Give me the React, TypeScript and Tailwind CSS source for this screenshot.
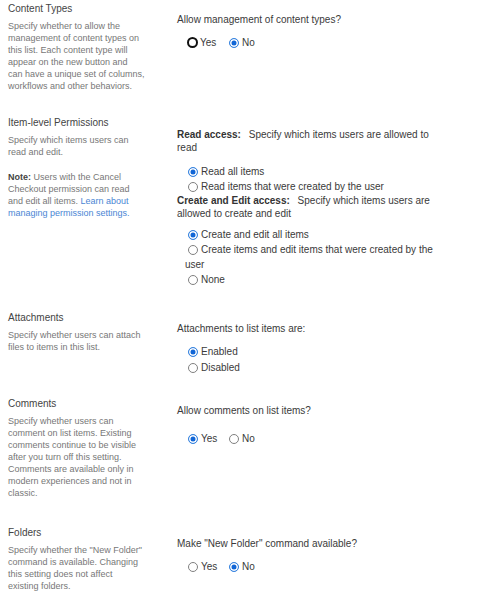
import type { ReactNode } from "react";

function Radio({ checked = false, focused = false }: { checked?: boolean; focused?: boolean }) {
  if (focused) {
    return (
      <span className="ml-[2px] mr-[2px] inline-block h-[11px] w-[11px] rounded-full border-2 border-[#111] bg-white align-[-2px]" />
    );
  }
  return checked ? (
    <span className="ml-[3px] mr-[3px] inline-block h-[10px] w-[10px] rounded-full border border-[#3a86e0] bg-[#1166d6] shadow-[inset_0_0_0_1.5px_#fff] align-[-2px]" />
  ) : (
    <span className="ml-[3px] mr-[3px] inline-block h-[10px] w-[10px] rounded-full border border-[#808080] bg-white align-[-2px]" />
  );
}

function YesNo({ value, focusYes = false, className = "" }: { value: "yes" | "no"; focusYes?: boolean; className?: string }) {
  return (
    <div className={`pl-2 leading-[15px] ${className}`}>
      <span className="inline-block w-[41px]">
        <Radio checked={value === "yes"} focused={focusYes} />
        Yes
      </span>
      <span className="inline-block">
        <Radio checked={value === "no"} />
        No
      </span>
    </div>
  );
}

function Section({
  title,
  desc,
  children,
  className = "",
}: {
  title: string;
  desc: ReactNode;
  children: ReactNode;
  className?: string;
}) {
  return (
    <div className={`flex items-start ${className}`}>
      <div className="w-[177px] shrink-0 pl-2">
        <div className="text-[10px] leading-[12px] text-[#444]">{title}</div>
        <div className="mt-[5px] whitespace-nowrap text-[9px] leading-[12px] text-[#777]">{desc}</div>
      </div>
      <div className="flex-1 whitespace-nowrap text-[10px] leading-[13px] text-[#3a3a3a]">{children}</div>
    </div>
  );
}

export default function App() {
  return (
    <div className="min-h-screen bg-white pt-[3px] font-['Liberation_Sans',Arial,sans-serif]">
      {/* Content Types */}
      <Section
        title="Content Types"
        desc={
          <>
            Specify whether to allow the
            <br />
            management of content types on
            <br />
            this list. Each content type will
            <br />
            appear on the new button and
            <br />
            can have a unique set of columns,
            <br />
            workflows and other behaviors.
          </>
        }
      >
        <p className="mt-[10px]">Allow management of content types?</p>
        <YesNo className="mt-[9px]" value="no" focusYes />
      </Section>

      {/* Item-level Permissions */}
      <Section
        className="mt-[25px]"
        title="Item-level Permissions"
        desc={
          <>
            <p>
              Specify which items users can
              <br />
              read and edit.
            </p>
            <p className="mt-[13px]">
              <b className="font-bold text-[#444]">Note:</b> Users with the Cancel
              <br />
              Checkout permission can read
              <br />
              and edit all items.{" "}
              <a className="text-[#4a86d4]">
                Learn about
                <br />
                managing permission settings.
              </a>
            </p>
          </>
        }
      >
        <p className="mt-[11px]">
          <b className="mr-[5px] font-bold text-[#333]">Read access:</b> Specify which items users are allowed to
          <br />
          read
        </p>
        <div className="mt-[10px] pl-2 leading-[15px]">
          <div>
            <Radio checked />
            Read all items
          </div>
          <div>
            <Radio />
            Read items that were created by the user
          </div>
        </div>
        <p>
          <b className="mr-[5px] font-bold text-[#333]">Create and Edit access:</b> Specify which items users are
          <br />
          allowed to create and edit
        </p>
        <div className="mt-[7px] pl-2 leading-[15px]">
          <div>
            <Radio checked />
            Create and edit all items
          </div>
          <div>
            <Radio />
            Create items and edit items that were created by the
            <br />
            user
          </div>
          <div>
            <Radio />
            None
          </div>
        </div>
      </Section>

      {/* Attachments */}
      <Section
        className="mt-[25px]"
        title="Attachments"
        desc={
          <>
            Specify whether users can attach
            <br />
            files to items in this list.
          </>
        }
      >
        <p className="mt-[10px]">Attachments to list items are:</p>
        <div className="mt-[9px] pl-2 leading-[16px]">
          <div>
            <Radio checked />
            Enabled
          </div>
          <div>
            <Radio />
            Disabled
          </div>
        </div>
      </Section>

      {/* Comments */}
      <Section
        className="mt-[22px]"
        title="Comments"
        desc={
          <>
            Specify whether users can
            <br />
            comment on list items. Existing
            <br />
            comments continue to be visible
            <br />
            after you turn off this setting.
            <br />
            Comments are available only in
            <br />
            modern experiences and not in
            <br />
            classic.
          </>
        }
      >
        <p className="mt-[6px]">Allow comments on list items?</p>
        <YesNo className="mt-[14px]" value="yes" />
      </Section>

      {/* Folders */}
      <Section
        className="mt-[28px]"
        title="Folders"
        desc={
          <>
            Specify whether the "New Folder"
            <br />
            command is available. Changing
            <br />
            this setting does not affect
            <br />
            existing folders.
          </>
        }
      >
        <p className="mt-[10px]">Make "New Folder" command available?</p>
        <YesNo className="mt-[9px]" value="no" />
      </Section>
    </div>
  );
}
